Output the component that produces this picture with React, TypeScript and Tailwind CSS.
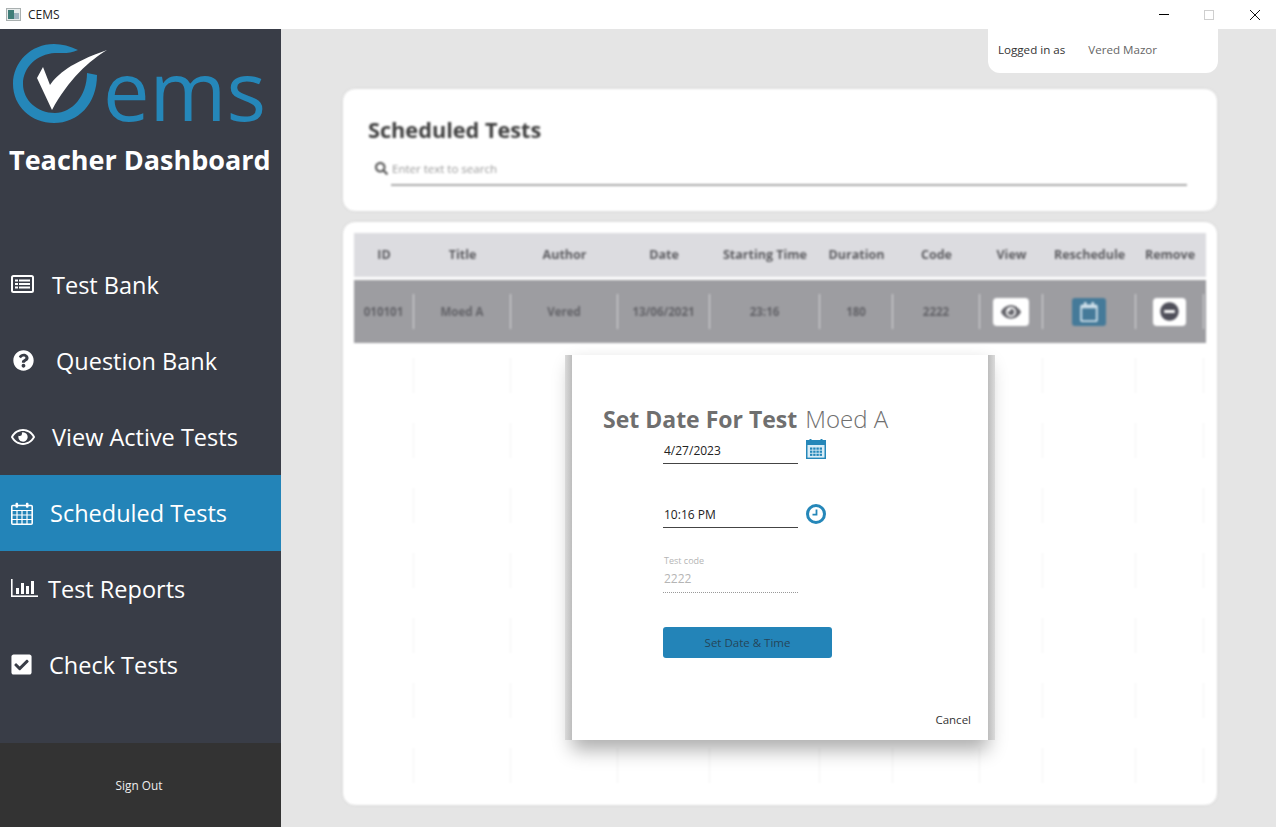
import { FaCheckSquare, FaEye, FaMinusCircle, FaQuestionCircle, FaRegCalendar, FaRegEye, FaSearch } from 'react-icons/fa';
import type { ReactNode } from 'react';

const columns = 'grid grid-cols-[60px_97px_107px_92px_110px_73px_87px_63px_93px_68px]';

const headers = ['ID', 'Title', 'Author', 'Date', 'Starting Time', 'Duration', 'Code', 'View', 'Reschedule', 'Remove'];
const rowValues = ['010101', 'Moed A', 'Vered', '13/06/2021', '23:16', '180', '2222'];

function ListIcon() {
  return (
    <svg width="23" height="18" viewBox="0 0 23 18" fill="#fff" className="-mt-[2px]">
      <rect x="1" y="1" width="21" height="16" rx="1.5" fill="none" stroke="#fff" strokeWidth="2" />
      <rect x="4" y="4.5" width="3" height="2" />
      <rect x="8" y="4.5" width="11" height="2" />
      <rect x="4" y="8" width="3" height="2" />
      <rect x="8" y="8" width="11" height="2" />
      <rect x="4" y="11.5" width="3" height="2" />
      <rect x="8" y="11.5" width="11" height="2" />
    </svg>
  );
}

function GridCalendarIcon() {
  return (
    <svg width="22" height="23" viewBox="0 0 22 23" fill="none" stroke="#fff" strokeWidth="1.2">
      <rect x="0.8" y="3.5" width="20.4" height="18.7" rx="1" strokeWidth="1.6" />
      <path d="M1 8.5H21M1 13H21M1 17.5H21M6 8.5V22M11 8.5V22M16 8.5V22" />
      <rect x="4.5" y="0.8" width="2.6" height="5" rx="1" fill="#fff" stroke="none" />
      <rect x="14.9" y="0.8" width="2.6" height="5" rx="1" fill="#fff" stroke="none" />
    </svg>
  );
}

function BarsIcon() {
  return (
    <svg width="27" height="18" viewBox="0 0 27 18" fill="#fff" className="-mt-[2px]">
      <rect x="0" y="0" width="1.6" height="18" />
      <rect x="0" y="16.4" width="27" height="1.6" />
      <rect x="5" y="9" width="3" height="6" />
      <rect x="10" y="4" width="3" height="11" />
      <rect x="15" y="7" width="3" height="8" />
      <rect x="20" y="2" width="3" height="13" />
    </svg>
  );
}

function DialogCalendarIcon() {
  const cells = [8.5, 11.6, 14.7].flatMap((y) => [4, 7.2, 10.4, 13.6].map((x) => ({ x, y })));
  return (
    <svg width="20" height="20" viewBox="0 0 20 20" className="mt-[4px]">
      <rect x="0" y="1" width="20" height="19" fill="#2587b9" />
      <rect x="1.5" y="6" width="17" height="12.6" fill="#d9edf7" />
      <rect x="3.5" y="0" width="2" height="2" fill="#2587b9" />
      <rect x="14.5" y="0" width="2" height="2" fill="#2587b9" />
      {cells.map((c) => (
        <rect key={`${c.x}-${c.y}`} x={c.x} y={c.y} width="2.4" height="2.2" fill="#2587b9" />
      ))}
    </svg>
  );
}

function DialogClockIcon() {
  return (
    <svg width="20" height="20" viewBox="0 0 20 20" fill="none" stroke="#2587b9" className="mt-[5px]">
      <circle cx="10" cy="10" r="8.5" strokeWidth="3" />
      <path d="M10.5 5.5V10.7H6.5" strokeWidth="1.8" />
    </svg>
  );
}

const navItems: { label: string; icon: ReactNode; gap: string; pl: string; active?: boolean }[] = [
  { label: 'Test Bank', icon: <ListIcon />, gap: 'gap-[18px]', pl: 'pl-[11px]' },
  { label: 'Question Bank', icon: <FaQuestionCircle className="-mt-px h-[21px] w-[21px]" />, gap: 'gap-[22px]', pl: 'pl-[13px]' },
  { label: 'View Active Tests', icon: <FaRegEye className="h-[24px] w-[24px]" />, gap: 'gap-[17px]', pl: 'pl-[11px]' },
  { label: 'Scheduled Tests', icon: <GridCalendarIcon />, gap: 'gap-[17px]', pl: 'pl-[11px]', active: true },
  { label: 'Test Reports', icon: <BarsIcon />, gap: 'gap-[10px]', pl: 'pl-[11px]' },
  { label: 'Check Tests', icon: <FaCheckSquare className="-mt-[2px] h-[23px] w-[21px]" />, gap: 'gap-[17px]', pl: 'pl-[11px]' },
];

function TitleBar() {
  return (
    <div className="flex h-[29px] items-center bg-white pl-[6px] pr-[16px]">
      <svg width="15" height="13" viewBox="0 0 15 13">
        <rect x="0.5" y="0.5" width="14" height="12" fill="#e8ecec" stroke="#a9b0b0" />
        <rect x="2" y="2" width="6" height="9" fill="#3f7d78" />
        <rect x="8" y="5" width="5" height="6" fill="#9fb4c0" />
      </svg>
      <span className="ml-[7px] text-[12px] text-[#222]">CEMS</span>
      <div className="ml-auto flex items-center gap-[35px]">
        <div className="h-px w-[10px] bg-black" />
        <div className="mr-px h-[10px] w-[10px] border border-[#cfcfcf]" />
        <svg width="10" height="10" viewBox="0 0 10 10">
          <path d="M0 0 10 10M10 0 0 10" stroke="#111" strokeWidth="1" />
        </svg>
      </div>
    </div>
  );
}

function Logo() {
  return (
    <div className="relative h-[98px] w-full">
      <svg width="110" height="98" viewBox="0 29 110 98" className="absolute left-0 top-0">
        <path
          d="M78 50C70 46 62 44 54 44C31 44 13 62 13 84C13 106 31 123 54 123C78 123 97 104 97 75L87 73C87 96 72 113 55 113C37 113 23 100 23 84C23 67 37 54 55 53C63 53 70 54 78 50Z"
          fill="#2587b9"
        />
        <path d="M37 78 43 67 50 85C58 74 70 63 107 50C90 60 68 80 52 110Z" fill="#fff" />
      </svg>
      <span className="absolute left-[103px] top-[20px] text-[83px] leading-[80px] text-[#2587b9]">ems</span>
    </div>
  );
}

function Sidebar() {
  return (
    <aside className="flex h-full w-[281px] shrink-0 flex-col bg-[#393d47] text-white">
      <div className="h-[218px]">
        <Logo />
        <h2 className="mt-[14px] whitespace-nowrap pl-[9px] text-[27px] font-bold leading-[38px]">Teacher Dashboard</h2>
      </div>
      <nav className="flex flex-col">
        {navItems.map((item) => (
          <div
            key={item.label}
            className={`flex h-[76px] items-center ${item.gap} ${item.pl} ${item.active ? 'bg-[#2384b8]' : ''}`}
          >
            {item.icon}
            <span className="whitespace-nowrap pt-[2px] text-[23.5px] leading-none">{item.label}</span>
          </div>
        ))}
      </nav>
      <div className="mt-auto flex h-[84px] items-center justify-center bg-[#333333] pr-[3px] pt-[2px] text-[11.8px] text-[#eee]">Sign Out</div>
    </aside>
  );
}

function ScheduledTable() {
  return (
    <div className="mt-[11px] h-[583px] rounded-xl bg-white px-[11px] pt-[11px] shadow-[0_0_3px_rgba(0,0,0,0.1)]">
      <div className={`${columns} h-[44px] items-center bg-[#dcdce0] text-center text-[12.5px] font-bold text-[#5c5c60]`}>
        {headers.map((h) => (
          <span key={h} className="whitespace-nowrap">{h}</span>
        ))}
      </div>
      <div className={`${columns} mt-[3px] h-[63px] items-center bg-[#9d9da1] text-center text-[11.5px] font-bold text-[#626267]`}>
        {rowValues.map((v) => (
          <div key={v} className="flex h-[35px] items-center justify-center whitespace-nowrap border-r border-[#d5d5d8]">{v}</div>
        ))}
        <div className="flex h-[35px] items-center justify-center border-r border-[#d5d5d8]">
          <div className="flex h-[28px] w-[36px] items-center justify-center rounded-sm bg-white text-[#66666c]"><FaEye className="h-[20px] w-[20px]" /></div>
        </div>
        <div className="flex h-[35px] items-center justify-center border-r border-[#d5d5d8]">
          <div className="flex h-[28px] w-[34px] items-center justify-center rounded-[3px] bg-[#457a99] text-[#cfe0ea]"><FaRegCalendar className="h-[20px] w-[18px]" /></div>
        </div>
        <div className="flex h-[35px] items-center justify-center border-r border-[#d5d5d8]">
          <div className="flex h-[28px] w-[33px] items-center justify-center rounded-sm bg-white text-[#4f4f5a]"><FaMinusCircle className="h-[19px] w-[19px]" /></div>
        </div>
      </div>
      {[0, 1, 2, 3, 4, 5, 6].map((r) => (
        <div key={r} className={`${columns} h-[65px] items-center`}>
          {headers.map((h) => (
            <div key={h} className="h-[35px] border-r border-[#f2f2f2]" />
          ))}
        </div>
      ))}
    </div>
  );
}

function DateDialog() {
  return (
    <div className="absolute left-[291px] top-[326px] h-[385px] w-[416px] bg-white pt-[49px] shadow-[0_10px_18px_rgba(0,0,0,0.32)]">
      <div className="absolute -left-[7px] top-0 h-full w-[7px] bg-gradient-to-r from-[#dadada] to-[#bdbdbd]" />
      <div className="absolute -right-[7px] top-0 h-full w-[7px] bg-gradient-to-l from-[#dadada] to-[#bdbdbd]" />
      <div className="flex items-baseline gap-[8px] pl-[31px] text-[23px] leading-[30px] text-[#6f6f6f]">
        <span className="whitespace-nowrap font-bold">Set Date For Test</span>
        <span className="whitespace-nowrap text-[24px] font-light">Moed A</span>
      </div>
      <div className="ml-[91px] mt-px flex items-start gap-[8px]">
        <div className="flex h-[29px] w-[135px] items-center border-b border-[#444] pl-px pt-[3px] text-[12px] text-[#222]">4/27/2023</div>
        <DialogCalendarIcon />
      </div>
      <div className="ml-[91px] mt-[35px] flex items-start gap-[8px]">
        <div className="flex h-[29px] w-[135px] items-center border-b border-[#444] pl-px pt-[3px] text-[12px] text-[#222]">10:16 PM</div>
        <DialogClockIcon />
      </div>
      <div className="ml-[91px] mt-[27px] w-[135px] border-b border-dotted border-[#999] pb-[5px] pl-px text-[#b5b5b5]">
        <div className="text-[9px] leading-[12px]">Test code</div>
        <div className="mt-[4px] text-[12px] leading-[16px]">2222</div>
      </div>
      <button type="button" className="ml-[91px] mt-[34px] flex h-[31px] w-[169px] items-center justify-center rounded-[3px] bg-[#2384b8] text-[11.5px] text-[#25465a]">
        Set Date &amp; Time
      </button>
      <span className="absolute bottom-[12px] right-[17px] text-[11.5px] text-[#333]">Cancel</span>
    </div>
  );
}

export default function App() {
  return (
    <div className="flex h-[827px] w-[1276px] flex-col overflow-hidden bg-white font-['Open_Sans',sans-serif]">
      <TitleBar />
      <div className="flex min-h-0 flex-1">
        <Sidebar />
        <main className="relative flex-1 bg-[#e5e5e5]">
          <div className="ml-[707px] flex h-[44px] w-[230px] items-center rounded-b-xl bg-white pb-[2px] pl-[10px] text-[11.6px]">
            <span className="text-[#333]">Logged in as</span>
            <span className="ml-[23px] text-[#666]">Vered Mazor</span>
          </div>
          <div className="ml-[62px] mt-[16px] w-[874px] blur-[1.3px]">
            <section className="h-[122px] rounded-xl bg-white pl-[25px] pt-[25px] shadow-[0_0_3px_rgba(0,0,0,0.1)]">
              <h1 className="text-[21.7px] font-bold leading-[32px] text-[#3f3f3f]">Scheduled Tests</h1>
              <div className="mt-[14px] flex items-center gap-[4px] pl-[7px]">
                <FaSearch className="h-[13px] w-[13px] text-[#555]" />
                <span className="text-[11.5px] text-[#999]">Enter text to search</span>
              </div>
              <div className="ml-[23px] mt-[7px] h-[2px] w-[796px] bg-[#aaa]" />
            </section>
            <ScheduledTable />
          </div>
          <DateDialog />
        </main>
      </div>
    </div>
  );
}
